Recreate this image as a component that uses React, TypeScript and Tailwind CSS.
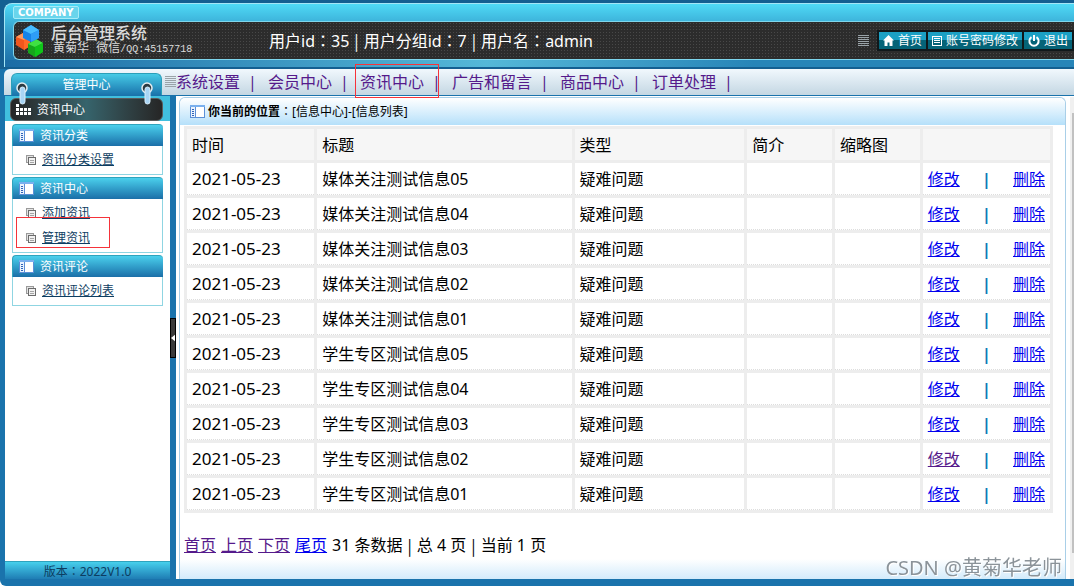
import React from 'react';

const NAV = ['系统设置', '会员中心', '资讯中心', '广告和留言', '商品中心', '订单处理'];

const MENU = [
  { title: '资讯分类', items: ['资讯分类设置'] },
  { title: '资讯中心', items: ['添加资讯', '管理资讯'] },
  { title: '资讯评论', items: ['资讯评论列表'] },
];

const ROWS = [
  '媒体关注测试信息05',
  '媒体关注测试信息04',
  '媒体关注测试信息03',
  '媒体关注测试信息02',
  '媒体关注测试信息01',
  '学生专区测试信息05',
  '学生专区测试信息04',
  '学生专区测试信息03',
  '学生专区测试信息02',
  '学生专区测试信息01',
];

const VISITED_ROW = 8;

const Logo: React.FC = () => (
  <svg width="28" height="34" viewBox="0 0 28 34" className="shrink-0">
    <path d="M0 13l7-4 7 4v9l-6 4-8-5z" fill="#f0561d" />
    <path d="M0 13l7-4 7 4-6 3z" fill="#ff9a5c" />
    <path d="M8 16l6-3v9l-6 4z" fill="#ff6a26" />
    <path d="M12 20l8-5 7 4v9l-8 5-7-4z" fill="#16a51c" />
    <path d="M12 20l8-5 7 4-8 4z" fill="#3fe043" />
    <path d="M19 23l8-4v9l-8 5z" fill="#0fc41a" />
    <path d="M7 6l8-5 8 5v8l-8 4-8-4z" fill="#1583e8" />
    <path d="M7 6l8-5 8 5-8 4z" fill="#48bdff" />
    <path d="M15 10l8-4v8l-8 4z" fill="#2f9df8" />
  </svg>
);

const PanelIcon: React.FC = () => (
  <svg width="15" height="13" viewBox="0 0 15 13" shapeRendering="crispEdges" className="shrink-0">
    <rect width="15" height="13" fill="#5b8fd6" />
    <rect y="0" width="15" height="2" fill="#79b0ee" />
    <rect x="1" y="2" width="4" height="10" fill="#eaf3fd" />
    <rect x="6" y="2" width="8" height="10" fill="#ffffff" />
    <path d="M2 4.5h2M2 6.5h2M2 8.5h2M2 10.5h2" stroke="#2f63b8" />
  </svg>
);

const CopyIcon: React.FC = () => (
  <svg width="10" height="10" viewBox="0 0 10 10" shapeRendering="crispEdges" className="shrink-0">
    <rect x="0.5" y="0.5" width="7" height="7" fill="#e4e4e4" stroke="#9a9a9a" />
    <rect x="2.5" y="2.5" width="7" height="7" fill="#f1f1f1" stroke="#6b6b6b" />
    <path d="M4 5.5h4M4 7.5h4" stroke="#a5a5a5" />
  </svg>
);

const GripIcon: React.FC = () => (
  <svg width="11" height="12" viewBox="0 0 11 12" shapeRendering="crispEdges" className="shrink-0">
    <path d="M0 .5h11M0 2.5h11M0 4.5h11M0 6.5h11M0 8.5h11M0 10.5h11" stroke="#9aa3a8" />
  </svg>
);

const DotsIcon: React.FC = () => (
  <svg width="16" height="12" viewBox="0 0 16 12" shapeRendering="crispEdges" fill="#fff" className="shrink-0">
    <path d="M0 0h3v3H0zM0 4h3v3H0zM4 4h3v3H4zM8 4h3v3H8zM12 4h3v3h-3zM0 8h3v3H0zM4 8h3v3H4zM8 8h3v3H8zM12 8h3v3h-3z" />
  </svg>
);

const Ring: React.FC = () => (
  <svg width="12" height="24" viewBox="0 0 12 24">
    <circle cx="6" cy="6" r="5" fill="#2b3a42" stroke="#e6edf0" strokeWidth="1.5" />
    <rect x="4" y="5" width="5" height="17" rx="2.5" fill="#a9d5f5" stroke="#d9effd" />
  </svg>
);

const HomeIcon: React.FC = () => (
  <svg width="11" height="11" viewBox="0 0 11 11" fill="#fff" className="shrink-0">
    <path d="M5.5 0L11 5.5H9.5V11h-3V7.500h-2V11h-3V5.500H0z" />
  </svg>
);

const ListIcon: React.FC = () => (
  <svg width="10" height="10" viewBox="0 0 10 10" shapeRendering="crispEdges" fill="none" stroke="#fff">
    <path d="M.5 0v10M9.5 0v10M0 .5h10M0 9.5h10M2 2.5h6M2 4.5h6M2 6.5h6" />
  </svg>
);

const PowerIcon: React.FC = () => (
  <svg width="12" height="12" viewBox="0 0 12 12" fill="none" stroke="#fff" strokeWidth="2">
    <path d="M3.500 2.200a4.600 4.600 0 1 0 5 0M6 0v6" />
  </svg>
);

// the TC face keeps the full-width colon centred in its box
const Colon: React.FC = () => <span className="font-['Noto_Sans_CJK_TC',sans-serif]">：</span>;

const Bar: React.FC = () => <span className="font-['Noto_Sans_CJK_SC',sans-serif]">|</span>;

const toolButton =
  'flex h-[17px] items-center gap-1 border-r-2 border-[#10181b] px-1 text-xs leading-4 text-white bg-linear-to-b from-[#1ba0c4] from-50% to-[#056377] to-50%';

const App: React.FC = () => {
  return (
    <div className="flex min-h-screen flex-col rounded-bl-md bg-[#1a73ac] font-['Noto_Sans','Noto_Sans_CJK_SC',sans-serif] text-base leading-5 text-black">
      <header className="border-b-2 border-[#145f91] bg-[#145f91] pt-[3px] pl-1">
        <div className="rounded-tl-lg border-t border-l border-[#a4e6f6] bg-linear-to-b from-[#4fdaf6] via-[#3096c6] to-[#1b6ca5]">
          <div className="flex h-[17px] items-center pl-2">
            <span className="flex h-[13px] items-center rounded-xs border border-[#a5ecf8] bg-[#69d5ec] px-1 font-['DejaVu_Sans'] text-[10px] font-bold text-white">COMPANY</span>
          </div>
          <div className="ml-2 flex h-[39px] items-center rounded-l-md border border-r-0 border-[#7fd6ec] bg-[#2c2c2c] bg-[radial-gradient(#484848_1px,transparent_1px)] bg-size-[3px_3px] pl-0.5">
            <Logo />
            <div className="ml-[7px] w-[218px] whitespace-nowrap text-[#dcdcdc]">
              <h1 className="text-base leading-[18px] font-medium">后台管理系统</h1>
              <p className="pl-0.5 font-['Liberation_Mono','Noto_Sans_CJK_SC',monospace] text-xs leading-[15px]">
                黄菊华 微信<span className="text-[10px]">/QQ:45157718</span>
              </p>
            </div>
            <p className="flex gap-[5px] whitespace-nowrap text-white">
              <span>用户id<Colon />35</span>
              <Bar />
              <span>用户分组id<Colon />7</span>
              <Bar />
              <span>用户名<Colon />admin</span>
            </p>
            <div className="ml-auto flex items-center">
              <GripIcon />
              <div className="ml-2 flex border-2 border-r-0 border-[#10181b]">
                <button className={toolButton}><HomeIcon />首页</button>
                <button className={toolButton}><ListIcon />账号密码修改</button>
                <button className={toolButton}><PowerIcon />退出</button>
              </div>
            </div>
          </div>
          <div className="h-[7px] bg-linear-to-r from-[#1b6ca5] via-[#55b8d8] via-45% to-[#2785b8] to-70%" />
        </div>
      </header>

      <nav className="ml-1 flex h-[27px] items-end rounded-tl-md border-b border-[#1a73ac] bg-linear-to-b from-[#f1f8fd] to-[#c4d7e3]">
        <div className="relative ml-[7px] flex h-[22px] w-[151px] items-center justify-center rounded-t-md border border-b-0 border-[#2b9fb9] bg-linear-to-b from-[#47cbe6] to-[#1b74ac] text-xs text-white">
          管理中心
          <span className="absolute top-2 left-1 z-10"><Ring /></span>
          <span className="absolute top-2 right-2 z-10"><Ring /></span>
        </div>
        <div className="flex h-full items-center pl-[3px]">
          <GripIcon />
          {NAV.map((label) => (
            <React.Fragment key={label}>
              <a href="#" className="relative whitespace-nowrap text-[#551a8b]">
                {label}
                {label === '资讯中心' && (
                  <span className="absolute -top-2 -left-[5px] h-[34px] w-[84px] border border-[#f5333a]" />
                )}
              </a>
              <span className="w-7 pl-2 text-[#551a8b]">|</span>
            </React.Fragment>
          ))}
        </div>
      </nav>

      <div className="flex grow pb-[7px] pl-[5px]">
        <aside className="flex w-[165px] shrink-0 flex-col bg-white text-xs">
          <div className="bg-[#41bfde] pt-0.5 pl-[5px]">
            <div className="flex h-[23px] w-[153px] items-center gap-[5px] rounded-md border border-[#5a5a5a] bg-linear-to-r from-[#262626] via-[#36646c] to-[#262626] pl-[5px] text-white">
              <DotsIcon />
              资讯中心
            </div>
          </div>
          <div className="flex grow flex-col gap-0.5 pt-[3px] pr-[7px] pl-[7px]">
            {MENU.map((group) => (
              <section key={group.title}>
                <h2 className="flex h-[22px] items-center gap-1.5 rounded-t-sm border-t border-l border-[#2fa3bd] bg-linear-to-b from-[#4bd0ec] to-[#1b6fa8] pl-1.5 text-white">
                  <PanelIcon />
                  {group.title}
                </h2>
                <ul className="border border-t-0 border-[#8fd5e2] pt-px pb-0.5">
                  {group.items.map((item) => (
                    <li key={item} className="relative flex h-[25px] items-center gap-1.5 pl-[13px]">
                      <CopyIcon />
                      <a href="#" className="text-[#0c3d61] underline">{item}</a>
                      {item === '管理资讯' && (
                        <span className="absolute -top-2 left-[3px] h-[31px] w-[94px] border border-[#f5333a]" />
                      )}
                    </li>
                  ))}
                </ul>
              </section>
            ))}
          </div>
          <footer className="h-[18px] border-t border-[#2fa3bd] bg-linear-to-b from-[#47d0ec] to-[#1f7db4] text-center leading-[18px] text-[#0c3d61]">
            版本<Colon />2022V1.0
          </footer>
        </aside>

        <div className="flex w-1.5 shrink-0 items-center">
          <button aria-label="收起菜单" className="flex h-10 w-1.5 items-center border border-black bg-[#3a3a3a]">
            <svg width="5" height="8" viewBox="0 0 5 8" fill="#fff">
              <path d="M5 0v8L0 4z" />
            </svg>
          </button>
        </div>

        <main className="flex min-w-0 grow bg-white pt-px pl-[3px]">
          <div className="flex min-w-0 grow flex-col rounded-t-md border border-b-0 border-[#a9cfe8] bg-linear-to-t from-[#d3ebfb] to-transparent to-[20px]">
            <div className="flex h-[27px] items-center gap-[3px] rounded-t-md bg-linear-to-b from-white to-[#b5e0fa] pl-2.5 text-xs">
              <PanelIcon />
              <p><b>你当前的位置</b><Colon />[信息中心]-[信息列表]</p>
            </div>
            <div className="pt-px pr-3 pl-1">
              <table className="w-full table-fixed border-separate border-spacing-[3px] bg-[#ededed] text-left">
                <thead>
                  <tr className="h-[31px] bg-[#f6f6f6]">
                    <th className="w-[15%] px-[5px] font-normal">时间</th>
                    <th className="w-[30%] px-[5px] font-normal">标题</th>
                    <th className="w-[20%] px-[5px] font-normal">类型</th>
                    <th className="w-[10%] px-[5px] font-normal">简介</th>
                    <th className="w-[10%] px-[5px] font-normal">缩略图</th>
                    <th className="w-[15%] px-[5px]" />
                  </tr>
                </thead>
                <tbody>
                  {ROWS.map((title, i) => (
                    <tr key={title} className="h-8 bg-white">
                      <td className="border-b border-dotted border-[#dddddd] px-[5px] text-[17px]">2021-05-23</td>
                      <td className="border-b border-dotted border-[#dddddd] px-[5px]">{title}</td>
                      <td className="border-b border-dotted border-[#dddddd] px-[5px]">疑难问题</td>
                      <td className="border-b border-dotted border-[#dddddd]" />
                      <td className="border-b border-dotted border-[#dddddd]" />
                      <td className="border-b border-dotted border-[#dddddd] px-[5px]">
                        <div className="flex justify-between">
                          <a href="#" className={i === VISITED_ROW ? 'text-[#551a8b] underline' : 'text-[#0000ee] underline'}>修改</a>
                          <span className="font-bold text-[#0a7bb5]">|</span>
                          <a href="#" className="text-[#0000ee] underline">删除</a>
                        </div>
                      </td>
                    </tr>
                  ))}
                </tbody>
              </table>
            </div>
            <div className="flex gap-[5px] pt-[22px] pl-1 whitespace-nowrap">
              <a href="#" className="text-[#551a8b] underline">首页</a>
              <a href="#" className="text-[#551a8b] underline">上页</a>
              <a href="#" className="text-[#551a8b] underline">下页</a>
              <a href="#" className="text-[#0000ee] underline">尾页</a>
              <span>31 条数据</span>
              <Bar />
              <span>总 4 页</span>
              <Bar />
              <span>当前 1 页</span>
            </div>
          </div>
          <div className="ml-1 w-1 shrink-0 bg-[#f0f0f0] pt-4 pl-0.5">
            <div className="h-[440px] bg-[#c1c1c1]" />
          </div>
        </main>
      </div>

      <div className="fixed right-3 bottom-1 text-xl leading-7 text-[#8b9399] [text-shadow:1px_1px_0_#ffffff]">CSDN @黄菊华老师</div>
    </div>
  );
};

export default App;
